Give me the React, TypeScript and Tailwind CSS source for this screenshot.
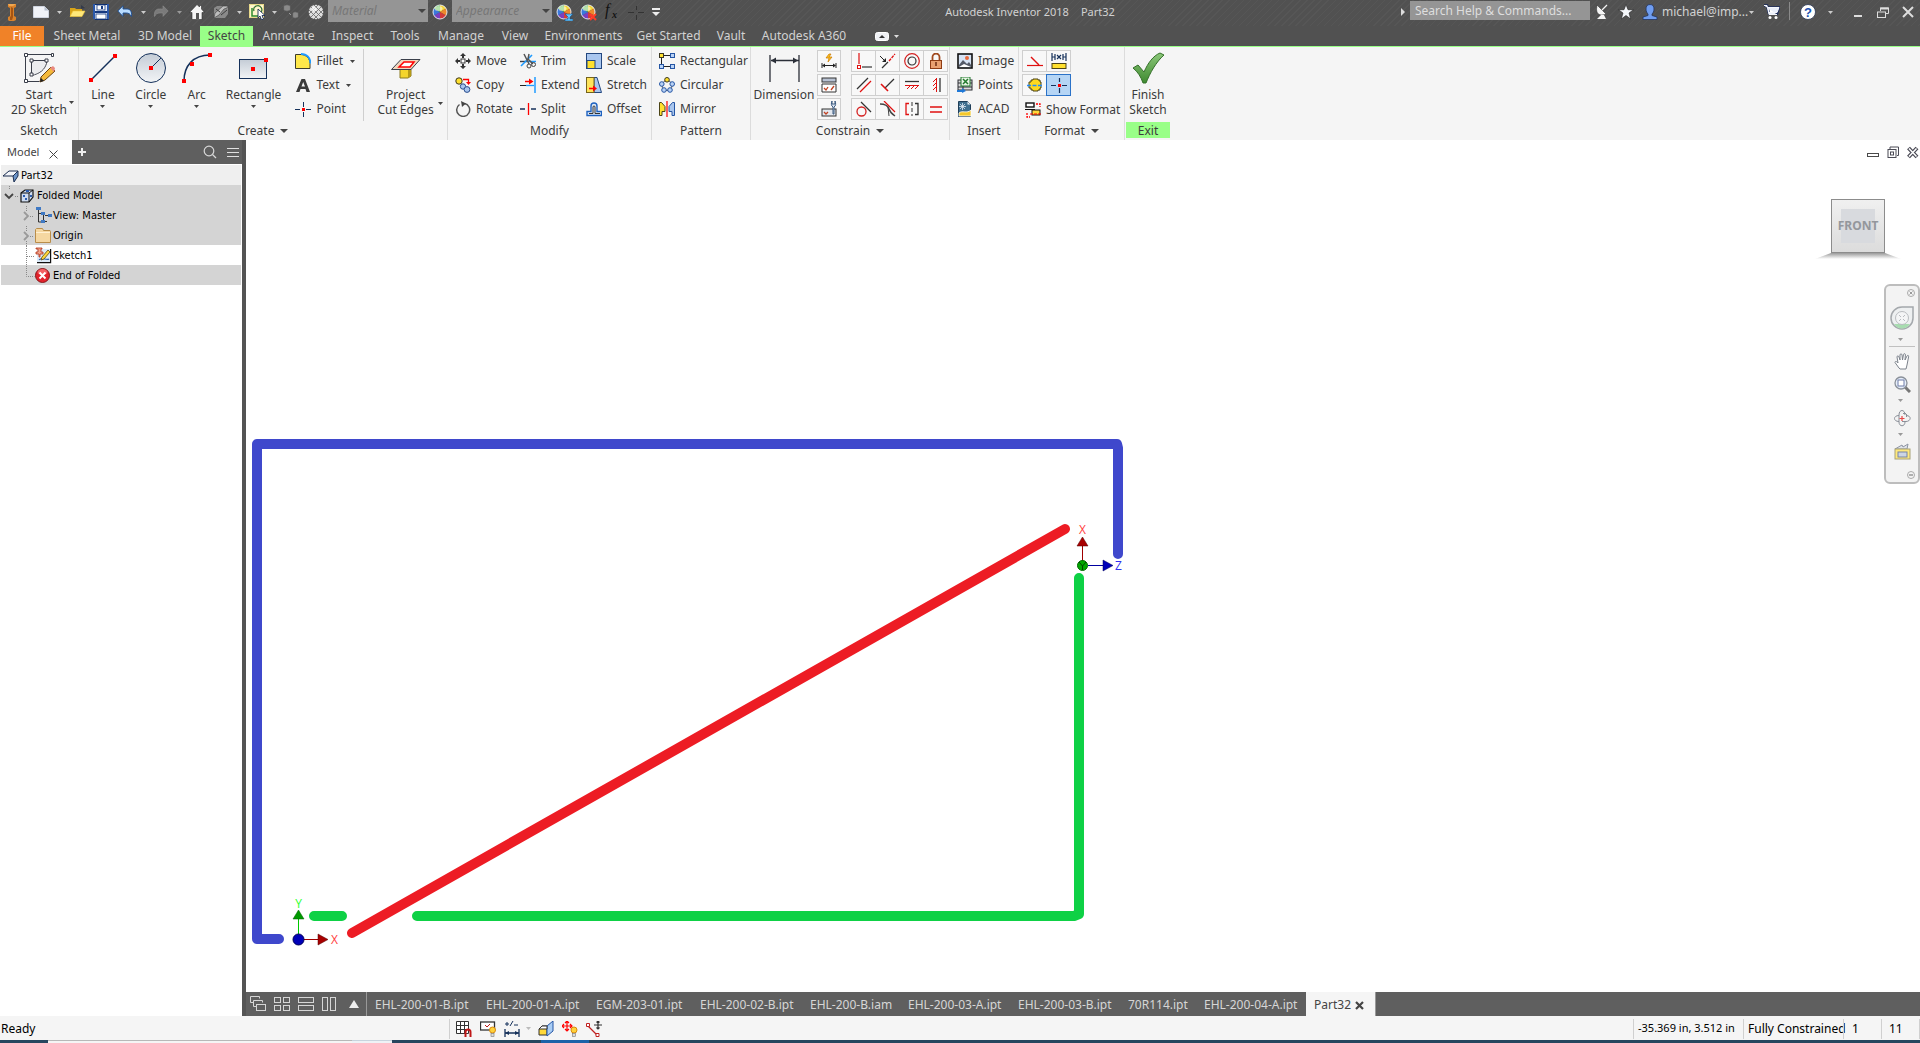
import type { ReactNode } from "react";

const RED = "#e01010";
const NAVY = "#14305a";

function Svg({ w = 16, h = 16, children }: { w?: number; h?: number; children: ReactNode }) {
  return (
    <svg width={w} height={h} viewBox={`0 0 ${w} ${h}`} fill="none" className="shrink-0" aria-hidden="true">
      {children}
    </svg>
  );
}

function Caret({ color = "#444" }: { color?: string }) {
  return (
    <Svg w={5} h={3}>
      <path d="M0 0h5L2.500 3z" fill={color} />
    </Svg>
  );
}

function BigCaret() {
  return (
    <Svg w={8} h={4}>
      <path d="M0 0h8L4 4z" fill="#444" />
    </Svg>
  );
}

function Dot({ x, y }: { x: number; y: number }) {
  return <rect x={x - 2} y={y - 2} width="4" height="4" fill="#f00" />;
}

/* ---------- Quick access icons ---------- */

const qa = {
  logo: (
    <Svg w={14} h={20}>
      <path d="M3 2h8v3l-2 1v8l2 1v3l-2 1H4l-1-1v-3l2-1V6L3 5z" fill="#d9822b" />
      <path d="M6 5l2 1v9l-1 3-2 0v-3l1-1z" fill="#a65412" />
      <path d="M3 2h8l-3 2H4z" fill="#f0a750" />
    </Svg>
  ),
  newDoc: (
    <Svg w={16} h={14}>
      <path d="M.5 1.500h11l4 4v7H.5z" fill="#f1f3f8" stroke="#cfd4df" />
      <path d="M11.500 1.500v4h4z" fill="#b8bfce" />
    </Svg>
  ),
  open: (
    <Svg w={17} h={14}>
      <path d="M1 3h5l1 1h6v3H4l-3 5z" fill="#d8a418" />
      <path d="M4 6h12l-3 5.500H1z" fill="#ffe87a" stroke="#f3c93a" strokeWidth=".6" />
      <path d="M12 0l4 3-4 1z" fill="#333a4a" />
    </Svg>
  ),
  save: (
    <Svg w={16} h={16}>
      <path d="M.5.5h15v15H2L.5 14z" fill="#e6ecf6" stroke="#0e2c66" />
      <rect x="2" y="7" width="12" height="2" fill="#173a80" />
      <rect x="4" y="1" width="8" height="5" fill="#fff" stroke="#173a80" strokeWidth=".8" />
      <rect x="3" y="10" width="10" height="5" fill="#fff" stroke="#173a80" strokeWidth=".8" />
      <rect x="8" y="2" width="2" height="3" fill="#173a80" />
      <rect x="0" y="0" width="2" height="15" fill="#2b58aa" />
      <rect x="14" y="0" width="2" height="15" fill="#2b58aa" />
    </Svg>
  ),
  undo: (
    <Svg w={16} h={14}>
      <path d="M6 .8v3.200h4c3 0 5 2 4.500 7.500C13 9 12 8 9 8H6v3.400L.8 6z" fill="#b9dcff" stroke="#1c4c92" strokeWidth=".9" />
    </Svg>
  ),
  redo: (
    <Svg w={16} h={14}>
      <path d="M10 .8v3.200H6C3 4 1 6 1.500 11.500 3 9 4 8 7 8h3v3.400L15.200 6z" fill="#7a7a7a" stroke="#8e8e8e" strokeWidth=".6" />
    </Svg>
  ),
  home: (
    <Svg w={16} h={16}>
      <path d="M8 .5L.5 8.500H3V15.500h10V8.500h2.500L12.500 5V1.500h-2V3z" fill="#f4f4f4" stroke="#2e2e2e" strokeWidth=".6" />
      <rect x="7" y="9" width="3" height="6" fill="#555" />
    </Svg>
  ),
  update: (
    <Svg w={16} h={16}>
      <path d="M1 4l3-2h11v8l-3 4H1z" fill="#8a8a8a" />
      <path d="M1 14l1-5 8-7h5l-1 2-3 1-5 6z" fill="#bdbdbd" stroke="#3c3c3c" strokeWidth=".6" />
      <path d="M8 11l6-5M3 5l4 3" stroke="#3c3c3c" />
    </Svg>
  ),
  select: (
    <Svg w={16} h={16}>
      <rect x=".5" y=".5" width="14" height="13" fill="#fff6cc" stroke="#e8d98a" />
      <path d="M3 4v8h7" stroke="#2f8a2f" strokeWidth="1.500" />
      <path d="M5 7a4 4 0 1 1 6 2" stroke="#2d6d2d" strokeWidth="1.200" />
      <path d="M9 5v9l2-2 1.500 4 2-1-1.500-3.500H16z" fill="#fff" stroke="#1b2d55" strokeWidth=".9" />
    </Svg>
  ),
  cubes: (
    <Svg w={16} h={16}>
      <path d="M1 2l3-1 3 1v4L4 7 1 6zM10 9l2-1 3 1v4l-3 1-2-1z" fill="#8a8a8a" stroke="#777" strokeWidth=".5" />
      <path d="M6 9l2 2" stroke="#999" />
    </Svg>
  ),
  sphere: (
    <Svg w={16} h={16}>
      <circle cx="8" cy="8" r="7.300" fill="#dedede" />
      <path
        d="M3 3l10 10M1 6l9 9M6 1l9 9M13 3L3 13M10 1L1 10M15 6l-9 9"
        stroke="#666"
        strokeWidth=".8"
      />
      <circle cx="6" cy="5" r="2.500" fill="#fff" opacity=".7" />
    </Svg>
  ),
  fx: (
    <svg width="16" height="18" viewBox="0 0 16 18" aria-hidden="true">
      <text x="1" y="12" fontFamily="Liberation Serif, serif" fontStyle="italic" fontSize="16" fill="#111">
        f
      </text>
      <text x="8" y="15" fontFamily="Liberation Serif, serif" fontStyle="italic" fontWeight="bold" fontSize="10" fill="#111">
        x
      </text>
    </svg>
  ),
  cross: (
    <Svg w={16} h={16}>
      <path d="M0 8.500h6M10 8.500h6M8.500 2v4M8.500 11v5" stroke="#333" />
    </Svg>
  ),
};

function Wheel({ badge }: { badge?: "plus" | "x" }) {
  return (
    <Svg w={17} h={17}>
      <path d="M8 8L8 1A7 7 0 0 1 14 4.500z" fill="#f4d435" />
      <path d="M8 8L14 4.500A7 7 0 0 1 14 11.500z" fill="#ef8a2c" />
      <path d="M8 8L14 11.500A7 7 0 0 1 8 15z" fill="#d33a3a" />
      <path d="M8 8L8 15A7 7 0 0 1 2 11.500z" fill="#7a3fc0" />
      <path d="M8 8L2 11.500A7 7 0 0 1 2 4.500z" fill="#3a78dc" />
      <path d="M8 8L2 4.500A7 7 0 0 1 8 1z" fill="#59bd4a" />
      <circle cx="8" cy="8" r="7" stroke="#eef2f8" strokeWidth=".9" />
      <ellipse cx="6.500" cy="4.500" rx="4" ry="2.500" fill="#fff" opacity=".55" />
      {badge === "plus" && <path d="M9 10h8l-3 3v2h3v2H9v-2h3v-2z" fill="#5ec6ff" stroke="#1a4a85" strokeWidth=".6" />}
      {badge === "x" && <path d="M10 10l6 6M16 10l-6 6" stroke="#ff3b26" strokeWidth="2" />}
    </Svg>
  );
}

/* ---------- Ribbon icons ---------- */

const big = {
  start: (
    <Svg w={32} h={32}>
      <path d="M2.500 2.500h27M2.500 2.500v27h14M8.500 8.500h15v3c-2 6-6 10-15 12z" stroke="#3a3f4a" />
      <path d="M9 9h14c-1 8-6 12-14 14z" fill="#e4e6ea" opacity=".6" />
      <path d="M1.500 1.500h3v3h-3zM28.500 1.500h2v3h-2zM1.500 27.500h3v3h-3zM7 7h3v3H7zM22 7h3v3h-3zM7 21h3v3H7z" fill="#fff" stroke="#3a3f4a" />
      <path d="M18 25l10-10 4 4-10 9-5 2z" fill="#f5b93a" stroke="#6b4310" />
      <path d="M27 16l3-2 2 2-1 4z" fill="#e98a80" />
      <path d="M17 30l1-4 3 3z" fill="#222" />
    </Svg>
  ),
  line: (
    <Svg w={32} h={32}>
      <path d="M4 28L28 4" stroke={NAVY} strokeWidth="1.500" />
      <Dot x={4} y={28} />
      <Dot x={28} y={4} />
    </Svg>
  ),
  circle: (
    <Svg w={32} h={32}>
      <defs>
        <linearGradient id="gc" x1="0" y1="0" x2="0" y2="1">
          <stop offset="0" stopColor="#c4ccd6" />
          <stop offset="1" stopColor="#f2f4f6" />
        </linearGradient>
      </defs>
      <circle cx="16" cy="16" r="14.500" fill="url(#gc)" stroke={NAVY} />
      <path d="M16 16L26 6" stroke={NAVY} />
      <Dot x={16} y={16} />
    </Svg>
  ),
  arc: (
    <Svg w={32} h={32}>
      <path d="M3 29C3 14 12 3 29 3" stroke={NAVY} strokeWidth="1.500" />
      <Dot x={3} y={29} />
      <Dot x={11} y={12} />
      <Dot x={29} y={3} />
    </Svg>
  ),
  rect: (
    <Svg w={32} h={32}>
      <rect x="1.500" y="7.500" width="27" height="19" fill="url(#gc)" stroke={NAVY} />
      <Dot x={15} y={17} />
      <Dot x={28} y={8} />
    </Svg>
  ),
  project: (
    <Svg w={32} h={32}>
      <path d="M10 15h11v9l-3 2h-8z" fill="#f4d52c" stroke="#8a7a22" />
      <path d="M18 17l3-2v9l-3 2z" fill="#b59a18" />
      <path d="M1.500 17.500L11 7.500h19l-9 10z" fill="#f2d6bd" stroke="#3a3f4a" />
      <path d="M9 15l5-5h10l-4 5z" fill="#fff" stroke="#f00" strokeWidth="1.500" />
    </Svg>
  ),
  dimension: (
    <Svg w={32} h={32}>
      <path d="M2 3v27M31 3v27M3 8.500h28" stroke="#2b2f38" strokeWidth="1.300" />
      <path d="M3 8.500l5-3v6zM30 8.500l-5-3v6z" fill="#2b2f38" />
    </Svg>
  ),
  finish: (
    <Svg w={32} h={32}>
      <defs>
        <linearGradient id="gf" x1="0" y1="0" x2="0" y2="1">
          <stop offset="0" stopColor="#8cc87a" />
          <stop offset="1" stopColor="#3f8a30" />
        </linearGradient>
      </defs>
      <path d="M1 16l5-3 6 7C16 11 21 4 28 1l4 2C24 10 18 21 14 31h-3C9 25 6 20 1 16z" fill="url(#gf)" stroke="#35702a" />
    </Svg>
  ),
};

const sm: Record<string, ReactNode> = {
  fillet: (
    <Svg>
      <path d="M.5 15.500V1.500H6c5 0 9 4 9 9v5z" fill="#ffe84a" stroke="#3c3c2c" />
      <path d="M6 1c6 0 9.500 4 9.500 9.500" stroke="#1f9bff" strokeWidth="1.800" />
    </Svg>
  ),
  text: (
    <Svg>
      <path d="M1 15L6.500 2h3.500l5 13h-3.500l-1-3h-5l-1 3zM6.500 9.500H10L8.200 5z" fill="#3a3a3a" fillRule="evenodd" />
    </Svg>
  ),
  point: (
    <Svg>
      <path d="M0 8.500h5M11 8.500h5M8.500 1v5M8.500 11v5" stroke={NAVY} />
      <rect x="7" y="7" width="3" height="3" fill="#f00" />
    </Svg>
  ),
  move: (
    <Svg>
      <rect x="6" y="6" width="4" height="4" fill="#fff" stroke="#333" />
      <path d="M8 0l3 3H9v2H7V3H5zM8 16l3-3H9v-2H7v2H5zM0 8l3-3v2h2v2H3v2zM16 8l-3-3v2h-2v2h2v2z" fill="#333" />
    </Svg>
  ),
  copy: (
    <Svg>
      <circle cx="4" cy="4" r="3.200" fill="#ffe02e" stroke="#3b3720" />
      <circle cx="8" cy="9.500" r="2.700" fill="#a9c6ee" stroke="#2c4f8e" />
      <circle cx="12" cy="12.500" r="2.900" fill="#a9c6ee" stroke="#2c4f8e" />
      <path d="M8 2.500h5.500v3" stroke="#f00" strokeWidth="1.300" />
      <path d="M11 5h5l-2.500 3z" fill="#f00" />
    </Svg>
  ),
  rotate: (
    <Svg>
      <path d="M9.500 2.500a6.500 6.500 0 1 1-5 1" stroke="#555" strokeWidth="1.500" />
      <path d="M6 0l5 2.500L7 6z" fill="#444" />
    </Svg>
  ),
  trim: (
    <Svg>
      <path d="M0 8.500h7" stroke="#3b3f48" strokeWidth="1.400" />
      <path d="M8 8.500h8" stroke="#1f9bff" strokeWidth="1.500" />
      <path d="M1 13L12 2" stroke="#1f9bff" strokeWidth="1.600" />
      <path d="M4 1l5 10M9 1L8 6l5 5" stroke="#555" strokeWidth="1.500" />
      <circle cx="9" cy="13" r="2" stroke="#444" />
      <circle cx="13.500" cy="11.500" r="2" stroke="#444" />
    </Svg>
  ),
  extend: (
    <Svg>
      <path d="M15 0v16" stroke="#1f9bff" strokeWidth="1.500" />
      <path d="M0 8.500h6" stroke="#222" />
      <path d="M6 8.500h8" stroke="#1f9bff" strokeWidth="1.300" />
      <path d="M5 4.500h5" stroke="#f00" strokeWidth="1.500" />
      <path d="M9 1.500l4.500 3-4.500 3z" fill="#f00" />
    </Svg>
  ),
  split: (
    <Svg>
      <path d="M0 8h5M11 8h5" stroke={NAVY} strokeWidth="1.500" />
      <path d="M8.500 2v12" stroke="#f00" strokeWidth="1.300" />
    </Svg>
  ),
  scale: (
    <Svg>
      <rect x=".5" y=".5" width="15" height="15" fill="#a9c6ee" stroke="#23477f" />
      <rect x="1" y="7.500" width="8" height="8" fill="#ffe02e" stroke="#23477f" />
    </Svg>
  ),
  stretch: (
    <Svg>
      <path d="M8 .5h3l4.500 15H8z" fill="#a9c6ee" stroke="#23477f" />
      <rect x=".5" y=".5" width="7.500" height="15" fill="#ffe35a" stroke="#75631b" />
      <path d="M3 11.500h5" stroke="#f00" strokeWidth="1.500" />
      <path d="M7 8.500l4 3-4 3z" fill="#f00" />
    </Svg>
  ),
  offset: (
    <Svg>
      <path d="M1 14.500h14.500v-4H11V5a3 3 0 0 0-6 0v5.500H1z" fill="#dfeaf7" stroke="#1e62c0" strokeWidth="1.400" />
      <path d="M3 12.500h4V6a1 1 0 0 1 2 0v6.500h5" stroke="#333" />
    </Svg>
  ),
  rectangular: (
    <Svg>
      <path d="M4 2.500h8M2.500 4v8M4 13.500h8" stroke="#222" />
      <rect x=".5" y=".5" width="4" height="4" fill="#ffe02e" stroke="#3b3720" />
      <rect x="11.500" y=".5" width="4" height="4" fill="#b9d2f5" stroke="#2455a4" />
      <rect x=".5" y="11.500" width="4" height="4" fill="#b9d2f5" stroke="#2455a4" />
      <rect x="11.500" y="11.500" width="4" height="4" fill="#b9d2f5" stroke="#2455a4" />
    </Svg>
  ),
  circular: (
    <Svg>
      <circle cx="8" cy="8.500" r="5" stroke="#555" />
      <circle cx="8" cy="2.800" r="2.300" fill="#ffe02e" stroke="#3b3720" />
      <circle cx="2.800" cy="7" r="2.300" fill="#b9d2f5" stroke="#2455a4" />
      <circle cx="13.200" cy="7" r="2.300" fill="#b9d2f5" stroke="#2455a4" />
      <circle cx="5" cy="13" r="2.300" fill="#b9d2f5" stroke="#2455a4" />
      <circle cx="11" cy="13" r="2.300" fill="#b9d2f5" stroke="#2455a4" />
    </Svg>
  ),
  mirror: (
    <Svg>
      <path d="M.5 14.500v-13h2l3.500 4v5h-3v4z" fill="#ffe02e" stroke="#4b4316" />
      <path d="M15.500 14.500v-13h-2l-3.500 4v5h3v4z" fill="#a9c6ee" stroke="#2455a4" />
      <path d="M8 0v16" stroke="#f00" strokeWidth="1.200" />
    </Svg>
  ),
  image: (
    <Svg>
      <rect x="1" y="1" width="14" height="14" fill="#d7e3f4" stroke="#111" strokeWidth="1.600" />
      <circle cx="10" cy="5" r="2" fill="#e96a3c" />
      <path d="M2 12l4-5 4 4 2-2 2 3v2H2z" fill="#555b68" />
      <path d="M2 14l5-3 7 3z" fill="#fff" />
    </Svg>
  ),
  points: (
    <Svg>
      <rect x="1" y="3" width="14" height="10" fill="#dcdcdc" stroke="#2d2f35" />
      <path d="M1 6h14M1 10h14M6 3v10" stroke="#2d2f35" />
      <rect x="4" y="0" width="9" height="9" fill="#e9f5e6" stroke="#217a2c" />
      <path d="M6 2l5 5M11 2L6 7" stroke="#217a2c" strokeWidth="1.500" />
      <path d="M0 13h5v-2l4 3-4 2v-1H0z" fill="#1f78d6" />
    </Svg>
  ),
  acad: (
    <Svg>
      <path d="M1.500.5h9l3 3v12h-12z" fill="#3f6f8e" stroke="#1f3e58" />
      <path d="M10.500.5v3h3z" fill="#e8eff5" />
      <path d="M5.500 2v7M2 5.500h7M3 3l5 5M8 3L3 8" stroke="#dfeaf2" strokeWidth=".8" />
      <path d="M2 12c3-3 8 1 12-3v6H2z" fill="#f4c82a" stroke="#fff" strokeWidth=".8" />
    </Svg>
  ),
  showFormat: (
    <Svg>
      <rect x="1" y="1" width="8" height="4" fill="#fff" stroke="#111" strokeWidth="1.400" />
      <path d="M0 7.500h10" stroke="#111" />
      <rect x="7" y="8" width="8" height="5" fill="#ffd83a" stroke="#111" />
      <path d="M5 12h11" stroke="#f00" strokeDasharray="3 1" />
      <path d="M11 2h4v3M2 11v4h3" stroke="#f00" strokeWidth="1.300" strokeDasharray="2 1" />
    </Svg>
  ),
};

const con: Record<string, ReactNode> = {
  auto: (
    <Svg>
      <path d="M1 10v5M15 10v5M2 12.500h12" stroke="#222" />
      <path d="M1 12.500l3-2v4zM15 12.500l-3-2v4z" fill="#222" />
      <path d="M8 1L5 5h3l-1 4 4-5H8l2-3z" fill="#ffc21c" stroke="#c77700" strokeWidth=".7" />
    </Svg>
  ),
  show: (
    <Svg>
      <rect x="1" y="1" width="14" height="4" fill="#b8c2d3" stroke="#333" />
      <path d="M1 7h14v8H1z" fill="#fff" stroke="#333" />
      <path d="M3 11l2 2 2-3M10 13l3-4" stroke="#c04020" strokeWidth="1.300" />
    </Svg>
  ),
  settings: (
    <Svg>
      <rect x="1" y="8" width="14" height="7" fill="#e3e8ef" stroke="#333" />
      <path d="M3 11l2 2 2-2" stroke="#c04020" strokeWidth="1.300" />
      <path d="M12 13V6c-2-1-2-4-1-6v3h3V0c1 2 1 5-1 6v7z" fill="#dfe7f2" stroke="#39597f" />
    </Svg>
  ),
  coincident: (
    <Svg>
      <path d="M3 0v11" stroke={RED} strokeWidth="1.200" />
      <rect x="1.500" y="12.500" width="3" height="3" fill="#fff" stroke={RED} />
      <path d="M6 14h10" stroke="#333" strokeWidth="1.200" />
    </Svg>
  ),
  collinear: (
    <Svg>
      <path d="M2 15l6-6" stroke="#333" strokeWidth="1.300" />
      <path d="M9 8l6-7" stroke={RED} strokeWidth="1.300" strokeDasharray="3 1" />
      <path d="M0 3l4 4" stroke="#222" />
      <path d="M6 9l-4 0 4-4z" fill="#222" />
    </Svg>
  ),
  concentric: (
    <Svg>
      <circle cx="8" cy="8" r="7.300" stroke="#d42020" strokeWidth="1.200" />
      <circle cx="8" cy="8" r="4" stroke="#333" strokeWidth="1.200" />
    </Svg>
  ),
  lock: (
    <Svg>
      <path d="M4.500 8V4a3.500 3.500 0 0 1 7 0v4" stroke="#a04a20" strokeWidth="1.800" />
      <rect x="2.500" y="7.500" width="11" height="8" fill="#e9a070" stroke="#8e3c14" />
      <path d="M8 9v4" stroke="#6e2c10" strokeWidth="1.500" />
    </Svg>
  ),
  parallel: (
    <Svg>
      <path d="M1 12L12 1" stroke="#333" strokeWidth="1.300" />
      <path d="M4 15L15 4" stroke={RED} strokeWidth="1.300" />
    </Svg>
  ),
  perpendicular: (
    <Svg>
      <path d="M5 11L14 2" stroke="#333" strokeWidth="1.300" />
      <path d="M1 7l7 7" stroke={RED} strokeWidth="1.600" />
    </Svg>
  ),
  horizontal: (
    <Svg>
      <path d="M1 4.500h14" stroke="#333" strokeWidth="1.300" />
      <path d="M1 8.500h14M3 12l3-3M7 12l3-3M11 12l3-3" stroke={RED} />
    </Svg>
  ),
  vertical: (
    <Svg>
      <path d="M12 1v14" stroke="#333" strokeWidth="1.300" />
      <path d="M8.500 1v14M5 5l3-3M5 9l3-3M5 13l3-3" stroke={RED} />
    </Svg>
  ),
  tangent: (
    <Svg>
      <circle cx="5.500" cy="10.500" r="4.500" stroke="#d42020" strokeWidth="1.300" />
      <path d="M5 1l10 10" stroke="#333" strokeWidth="1.300" />
    </Svg>
  ),
  smooth: (
    <Svg>
      <path d="M0 3c5 0 8 2 9 5s3 5 6 7" stroke="#444" strokeWidth="1.500" />
      <path d="M4 0l11 11" stroke={RED} strokeWidth="1.200" />
      <path d="M8 6l1 9" stroke="#444" />
    </Svg>
  ),
  symmetric: (
    <Svg>
      <path d="M5 2.500H2v11h3" stroke={RED} strokeWidth="1.300" />
      <path d="M11 2.500h3v11h-3" stroke="#333" strokeWidth="1.300" />
      <path d="M8 1v14" stroke="#333" strokeDasharray="4 2" />
    </Svg>
  ),
  equal: (
    <Svg>
      <path d="M2 6h12M2 11h12" stroke={RED} strokeWidth="1.300" />
    </Svg>
  ),
  construction: (
    <Svg>
      <path d="M0 12.500h16" stroke={RED} strokeWidth="1.200" />
      <path d="M4 4l8 8" stroke={RED} strokeWidth="1.400" />
    </Svg>
  ),
  driven: (
    <Svg>
      <path d="M1 0v8M1 4h3M4 1v6M15 0v8M12 4h3M12 1v6" stroke={NAVY} strokeWidth="1.200" />
      <path d="M6 2l4 4M10 2L6 6" stroke={NAVY} strokeWidth="1.200" />
      <rect x="1" y="10.500" width="14" height="5" fill="#ffe02e" stroke="#4b4316" />
    </Svg>
  ),
  centerline: (
    <Svg>
      <path d="M4 3h2V2h5v1h2v2h1v6h-1v2h-2v1H6v-1H4v-2H2V5h2z" fill="#ffd91e" stroke="#4b4316" />
      <path d="M0 8.500h16" stroke="#1f8bff" strokeWidth="1.500" strokeDasharray="4 1.500" />
    </Svg>
  ),
  center: (
    <Svg>
      <path d="M0 8.500h5M11 8.500h5M8.500 1v4M8.500 11v5" stroke={NAVY} strokeWidth="1.200" />
      <rect x="7" y="7" width="3" height="3" fill="#f00" />
    </Svg>
  ),
};

/* ---------- Ribbon building blocks ---------- */

function Panel({ title, width, caret, green, last, children }: {
  title: string;
  width: string;
  caret?: boolean;
  green?: boolean;
  last?: boolean;
  children: ReactNode;
}) {
  return (
    <section className={`${width} flex shrink-0 flex-col ${last ? "" : "border-r border-[#dcdcdc]"}`}>
      <div className="flex h-[74px] pt-0.5">{children}</div>
      <h2
        className={`flex items-center justify-center gap-1.5 pt-px ${
          green ? "mx-px my-0.5 h-4 bg-[#99ff88]" : "h-5"
        }`}
      >
        {title}
        {caret && <BigCaret />}
      </h2>
    </section>
  );
}

function BigButton({ icon, lines, width, caret, side }: {
  icon: ReactNode;
  lines: string[];
  width: string;
  caret?: boolean;
  side?: boolean;
}) {
  return (
    <button type="button" className={`${width} relative flex flex-col items-center pt-[3px] leading-[15px]`}>
      {icon}
      <span className="mt-[3px] flex flex-col items-center">
        {lines.map((l) => (
          <span key={l}>{l}</span>
        ))}
      </span>
      {caret && (
        <span className={side ? "absolute right-1 bottom-4" : "mt-[3px]"}>
          <Caret />
        </span>
      )}
    </button>
  );
}

function SmallButton({ icon, label, caret }: { icon: string; label: string; caret?: boolean }) {
  return (
    <button type="button" className="flex h-6 items-center gap-[5px] whitespace-nowrap">
      {sm[icon]}
      {label}
      {caret && (
        <span className="ml-0.5">
          <Caret />
        </span>
      )}
    </button>
  );
}

function Column({ width, items }: { width: string; items: [string, string, boolean?][] }) {
  return (
    <div className={`${width} flex flex-col items-start pl-[7px]`}>
      {items.map(([icon, label, caret]) => (
        <SmallButton key={icon} icon={icon} label={label} caret={caret} />
      ))}
    </div>
  );
}

function Tool({ icon, active, joined }: { icon: string; active?: boolean; joined?: boolean }) {
  return (
    <button
      type="button"
      aria-label={icon}
      className={`flex h-[22px] items-center justify-center border ${joined ? "-ml-px w-[25px]" : "w-6"} ${
        active ? "relative border-[#2a72c8] bg-[#b5d5f5]" : "border-[#cfcfcf] bg-[#f8f8f8]"
      }`}
    >
      {con[icon]}
    </button>
  );
}

/* ---------- Page sections ---------- */

function QaButton({ label, children, width = "w-6" }: { label: string; children: ReactNode; width?: string }) {
  return (
    <button type="button" aria-label={label} className={`${width} flex h-6 shrink-0 items-center justify-center`}>
      {children}
    </button>
  );
}

function QaSelect({ label }: { label: string }) {
  return (
    <div className="relative shrink-0">
      <select
        aria-label={label}
        className="block h-[22px] w-[100px] appearance-none bg-[#959595] px-1 text-xs leading-[22px] text-[#777] italic"
      >
        <option>{label}</option>
      </select>
      <span className="pointer-events-none absolute top-[9px] right-0.5">
        <BigCaret />
      </span>
    </div>
  );
}

function TitleBar() {
  return (
    <header className="flex h-[26px] items-start justify-between bg-[#515151] bg-[repeating-linear-gradient(135deg,#515151_0px,#515151_4px,#565656_4px,#565656_5px)] text-[#d2d2d2]">
      <div className="flex items-start">
        <QaButton label="Inventor">{qa.logo}</QaButton>
        <span className="w-[5px]" />
        <QaButton label="New">{qa.newDoc}</QaButton>
        <QaButton label="New options" width="w-3"><Caret color="#ccc" /></QaButton>
        <QaButton label="Open">{qa.open}</QaButton>
        <QaButton label="Save">{qa.save}</QaButton>
        <QaButton label="Undo">{qa.undo}</QaButton>
        <QaButton label="Undo list" width="w-3"><Caret color="#ccc" /></QaButton>
        <QaButton label="Redo">{qa.redo}</QaButton>
        <QaButton label="Redo list" width="w-3"><Caret color="#999" /></QaButton>
        <QaButton label="Home">{qa.home}</QaButton>
        <QaButton label="Update">{qa.update}</QaButton>
        <QaButton label="Update options" width="w-3"><Caret color="#ccc" /></QaButton>
        <QaButton label="Select">{qa.select}</QaButton>
        <QaButton label="Select options" width="w-2.5"><Caret color="#ccc" /></QaButton>
        <QaButton label="Return">{qa.cubes}</QaButton>
        <QaButton label="Material browser" width="w-[25px]">{qa.sphere}</QaButton>
        <QaSelect label="Material" />
        <QaButton label="Appearance browser"><Wheel /></QaButton>
        <QaSelect label="Appearance" />
        <QaButton label="Adjust appearance"><Wheel badge="plus" /></QaButton>
        <QaButton label="Clear appearance"><Wheel badge="x" /></QaButton>
        <QaButton label="Parameters">{qa.fx}</QaButton>
        <QaButton label="Work point">{qa.cross}</QaButton>
        <QaButton label="Customize" width="w-4">
          <Svg w={8} h={8}>
            <path d="M0 1h8" stroke="#eee" strokeWidth="2" />
            <path d="M0 4h8L4 8z" fill="#eee" />
          </Svg>
        </QaButton>
      </div>
      <h1 className="flex gap-3 pt-1 text-[11px] leading-4">
        <span>Autodesk Inventor 2018</span>
        <span>Part32</span>
      </h1>
      <div className="flex items-start">
        <QaButton label="Expand search" width="w-3.5">
          <Svg w={4} h={8}>
            <path d="M0 0v8l4-4z" fill="#ddd" />
          </Svg>
        </QaButton>
        <input
          aria-label="Search Help and Commands"
          placeholder="Search Help & Commands..."
          className="mt-px h-[19px] w-[180px] bg-[#959595] px-[5px] text-xs placeholder:text-[#dedede]"
        />
        <QaButton label="Communication center">
          <Svg w={14}>
            <path d="M2 1l9 9c-4 2-8 1-9-2s0-5 0-7z" fill="#f4f4f4" stroke="#222" strokeWidth=".5" />
            <path d="M7 6l5-5" stroke="#f4f4f4" strokeWidth="1.300" />
            <path d="M6 11h3l2 4H2z" fill="#f4f4f4" />
          </Svg>
        </QaButton>
        <QaButton label="Favorites">
          <Svg>
            <path d="M8 .5l2 5.200h5.500L11 9l1.700 6L8 11.500 3.300 15 5 9 .5 5.700H6z" fill="#f4f6fa" stroke="#222" strokeWidth=".6" />
          </Svg>
        </QaButton>
        <QaButton label="User">
          <Svg>
            <path d="M8 .5c3 0 4 2 4 4.500S11 9 10 10v1.500l5 1.500v2.500H1V13l5-1.500V10C5 9 4 7.500 4 5S5 .5 8 .5z" fill="#6f9df0" stroke="#22345e" strokeWidth=".8" />
          </Svg>
        </QaButton>
        <button type="button" className="flex h-6 w-[95px] items-center justify-between pr-[3px]">
          michael@imp...
          <Caret color="#ccc" />
        </button>
        <QaButton label="Store" width="w-[30px]">
          <Svg>
            <path d="M0 1.500h3l2 8h8l2-6H4" fill="#fff" stroke="#1c2c5c" strokeWidth="2.500" />
            <path d="M0 1.500h3l2 9h8M4 3.500h11l-2 5H5z" fill="#e9eefa" stroke="#f4f6fc" />
            <circle cx="6" cy="13.500" r="1.500" fill="#fff" />
            <circle cx="12" cy="13.500" r="1.500" fill="#fff" />
          </Svg>
        </QaButton>
        <span className="mx-0.5 mt-0.5 h-[18px] w-px bg-[#8a8a8a]" />
        <QaButton label="Help" width="w-8">
          <svg width="16" height="16" viewBox="0 0 16 16" aria-hidden="true">
            <circle cx="8" cy="8" r="7.500" fill="#fff" stroke="#2a3550" strokeWidth=".8" />
            <text x="8" y="12.500" textAnchor="middle" fontFamily="Liberation Sans, sans-serif" fontWeight="bold" fontSize="13" fill="#2050b0">
              ?
            </text>
          </svg>
        </QaButton>
        <QaButton label="Help options" width="w-3"><Caret color="#ccc" /></QaButton>
        <span className="w-2.5" />
        <QaButton label="Minimize">
          <Svg w={8} h={10}><path d="M0 9h8" stroke="#ddd" strokeWidth="2" /></Svg>
        </QaButton>
        <QaButton label="Restore" width="w-[26px]">
          <Svg w={12} h={11}>
            <path d="M3.500 4V1h8v5.500h-3" stroke="#ddd" />
            <path d="M3 1.500h9" stroke="#ddd" strokeWidth="2" />
            <rect x=".5" y="5" width="8" height="5.500" stroke="#ddd" />
          </Svg>
        </QaButton>
        <QaButton label="Close">
          <Svg w={12} h={12}><path d="M1 1l10 10M11 1L1 11" stroke="#ddd" strokeWidth="2" /></Svg>
        </QaButton>
      </div>
    </header>
  );
}

const ribbonTabs: [string, string][] = [
  ["Sheet Metal", "w-[86px]"],
  ["3D Model", "w-[70px]"],
  ["Sketch", "w-[53px]"],
  ["Annotate", "w-[71px]"],
  ["Inspect", "w-[57px]"],
  ["Tools", "w-[48px]"],
  ["Manage", "w-[64px]"],
  ["View", "w-[44px]"],
  ["Environments", "w-[93px]"],
  ["Get Started", "w-[77px]"],
  ["Vault", "w-[48px]"],
  ["Autodesk A360", "w-[98px]"],
];

function RibbonTabs() {
  return (
    <nav className="flex h-[21px] border-b border-[#99ff88] bg-[#515151] text-[#d2d2d2]">
      <button type="button" className="w-11 bg-[#f08228] text-white">File</button>
      {ribbonTabs.map(([label, width]) => (
        <button
          key={label}
          type="button"
          className={`${width} shrink-0 whitespace-nowrap ${label === "Sketch" ? "bg-[#99ff88] text-[#444]" : ""}`}
        >
          {label}
        </button>
      ))}
      <button type="button" aria-label="Ribbon display" className="ml-[22px] flex items-center gap-[5px]">
        <Svg w={14} h={9}>
          <rect x=".5" y=".5" width="13" height="8" rx="2" fill="#eef0f4" stroke="#fff" />
          <path d="M4 6h6L7 3z" fill="#333" />
        </Svg>
        <Caret color="#ddd" />
      </button>
    </nav>
  );
}

const constraintRows = [
  ["coincident", "collinear", "concentric", "lock"],
  ["parallel", "perpendicular", "horizontal", "vertical"],
  ["tangent", "smooth", "symmetric", "equal"],
];

function Ribbon() {
  return (
    <div className="flex h-[93px] bg-[#f5f5f5] text-[#3b3b3b]">
      <Panel title="Sketch" width="w-[79px]">
        <BigButton icon={big.start} lines={["Start", "2D Sketch"]} width="w-full" caret side />
      </Panel>
      <Panel title="Create" width="w-[369px]" caret>
        <BigButton icon={big.line} lines={["Line"]} width="w-12" caret />
        <BigButton icon={big.circle} lines={["Circle"]} width="w-12" caret />
        <BigButton icon={big.arc} lines={["Arc"]} width="w-11" caret />
        <BigButton icon={big.rect} lines={["Rectangle"]} width="w-[70px]" caret />
        <Column width="w-[75px]" items={[["fillet", "Fillet", true], ["text", "Text", true], ["point", "Point"]]} />
        <span className="w-px bg-[#cfcfcf]" />
        <BigButton icon={big.project} lines={["Project", "Cut Edges"]} width="w-[83px]" caret side />
      </Panel>
      <Panel title="Modify" width="w-[204px]">
        <Column width="w-[65px]" items={[["move", "Move"], ["copy", "Copy"], ["rotate", "Rotate"]]} />
        <Column width="w-[66px]" items={[["trim", "Trim"], ["extend", "Extend"], ["split", "Split"]]} />
        <Column width="w-[72px]" items={[["scale", "Scale"], ["stretch", "Stretch"], ["offset", "Offset"]]} />
      </Panel>
      <Panel title="Pattern" width="w-[99px]">
        <Column
          width="w-full"
          items={[["rectangular", "Rectangular"], ["circular", "Circular"], ["mirror", "Mirror"]]}
        />
      </Panel>
      <Panel title="Constrain" width="w-[199px]" caret>
        <BigButton icon={big.dimension} lines={["Dimension"]} width="w-[66px]" />
        <div className="flex flex-col gap-0.5 pt-px">
          <Tool icon="auto" />
          <Tool icon="show" />
          <Tool icon="settings" />
        </div>
        <div className="ml-[11px] flex flex-col gap-0.5 pt-px">
          {constraintRows.map((row) => (
            <div key={row[0]} className="flex">
              {row.map((icon) => (
                <Tool key={icon} icon={icon} joined />
              ))}
            </div>
          ))}
        </div>
      </Panel>
      <Panel title="Insert" width="w-[69px]">
        <Column width="w-full" items={[["image", "Image"], ["points", "Points"], ["acad", "ACAD"]]} />
      </Panel>
      <Panel title="Format" width="w-[106px]" caret>
        <div className="flex flex-col gap-0.5 pt-px pl-1">
          <div className="flex">
            <Tool icon="construction" joined />
            <Tool icon="driven" joined />
          </div>
          <div className="flex">
            <Tool icon="centerline" joined />
            <Tool icon="center" joined active />
          </div>
          <div className="pl-0.5">
            <SmallButton icon="showFormat" label="Show Format" />
          </div>
        </div>
      </Panel>
      <Panel title="Exit" width="w-[46px]" green last>
        <BigButton icon={big.finish} lines={["Finish", "Sketch"]} width="w-full" />
      </Panel>
    </div>
  );
}

/* ---------- Model browser ---------- */

const chevronRight = <path d="M23 6l4 4-4 4" stroke="#999" strokeWidth="1.800" />;
const dotted = { stroke: "#888", strokeDasharray: "1 1" };

const tree: { label: string; bg: string; w: number; art: ReactNode }[] = [
  {
    label: "Part32",
    bg: "bg-[#efefef]",
    w: 19,
    art: (
      <>
        <path d="M2 10l6-5h9l-5 5z" fill="#f4f6fa" stroke="#1a2d50" />
        <path d="M12 10l5-5v5l-4 6z" fill="#6b93c8" stroke="#1a2d50" />
      </>
    ),
  },
  {
    label: "Folded Model",
    bg: "bg-[#d4d4d4]",
    w: 35,
    art: (
      <>
        <path d="M8.500 0v4M14 10.500h4" {...dotted} />
        <path d="M4 8l4 4 4-4" stroke="#444" strokeWidth="1.800" />
        <path d="M20 7l4-3h8v7l-4 5h-8z" fill="#cfdcf0" stroke="#111" strokeWidth="1.200" />
        <path d="M20 7h8v9M28 7l4-3" stroke="#111" />
        <path d="M22 9h2v2h-2zM24 12h2v2h-2zM25 4h3v2h-3zM29 9h2v2h-2z" fill="#2c5cae" />
      </>
    ),
  },
  {
    label: "View: Master",
    bg: "bg-[#d4d4d4]",
    w: 51,
    art: (
      <>
        <path d="M25.500 0v5M29 10.500h4" {...dotted} />
        {chevronRight}
        <path d="M37.500 4v12h3M37.500 7.500h3M42.500 9v6M44 9.500h6M44 15.500h2" stroke="#333" />
        <path d="M35 1h5v3h-5zM40 6h4v3h-4zM40 14h4v3h-4zM47 8h4v3h-4z" fill="#3f79c4" />
      </>
    ),
  },
  {
    label: "Origin",
    bg: "bg-[#d4d4d4]",
    w: 51,
    art: (
      <>
        <path d="M25.500 0v5M25.500 15v5M29 10.500h4" {...dotted} />
        {chevronRight}
        <path d="M34.500 16.500v-13l1-1h6l1 2h6.500l.5 1v11z" fill="#f5d7a1" stroke="#b98d4a" />
        <path d="M35 6.500h14" stroke="#fff0d2" />
      </>
    ),
  },
  {
    label: "Sketch1",
    bg: "bg-white",
    w: 51,
    art: (
      <>
        <path d="M25.500 0v20M26 10.500h8" {...dotted} />
        <path d="M36 16.500h13.500V3" stroke="#111" strokeWidth="1.400" />
        <rect x="36" y="3" width="13" height="13" fill="#dceaf8" />
        <path d="M38 14c3-4 7 1 10-1" stroke="#2b62b0" strokeWidth="1.200" />
        <path d="M41 11l6-7 2 2-6 7-3 1z" fill="#ffd63a" stroke="#5e4a10" strokeWidth=".8" />
        <path d="M35 2h6v1h-1v3h2v2h-3v3h-1V8h-3V6h2V3h-2z" fill="#f3a58c" stroke="#b23418" strokeWidth=".8" />
      </>
    ),
  },
  {
    label: "End of Folded",
    bg: "bg-[#d4d4d4]",
    w: 51,
    art: (
      <>
        <path d="M25.500 0v10.500h8" {...dotted} />
        <circle cx="41.500" cy="9.500" r="7" fill="#e2232c" stroke="#7d0d12" strokeWidth=".9" />
        <ellipse cx="41.500" cy="6" rx="5" ry="3" fill="#ff8a8a" opacity=".6" />
        <path d="M38.500 6.500l6 6M44.500 6.500l-6 6" stroke="#fff" strokeWidth="2" />
      </>
    ),
  },
];

function ModelBrowser() {
  return (
    <aside className="flex w-[242px] shrink-0 flex-col bg-white">
      <div className="flex h-6 bg-[#5f5f5f]">
        <div className="flex w-[72px] items-center bg-white pl-[7px] text-[11px] text-[#444]">
          Model
          <button type="button" aria-label="Close panel" className="mt-1 ml-auto pr-3.5">
            <Svg w={9} h={9}><path d="M.5.5l8 8M8.500.5l-8 8" stroke="#444" /></Svg>
          </button>
        </div>
        <button type="button" aria-label="Add panel" className="ml-1.5">
          <Svg w={8} h={8}><path d="M4 0v8M0 4h8" stroke="#eee" strokeWidth="2" /></Svg>
        </button>
        <button type="button" aria-label="Search" className="ml-auto">
          <Svg w={14} h={14}>
            <circle cx="6" cy="6" r="4.800" stroke="#d8d8d8" strokeWidth="1.200" />
            <path d="M9.500 9.500l3.500 3.500" stroke="#d8d8d8" strokeWidth="1.200" />
          </Svg>
        </button>
        <button type="button" aria-label="Menu" className="mr-[3px] ml-2.5">
          <Svg w={12} h={11}><path d="M0 1.500h12M0 5.500h12M0 9.500h12" stroke="#e0e0e0" /></Svg>
        </button>
      </div>
      <ul className="mt-px mr-px ml-px font-['DejaVu_Sans_Condensed','DejaVu_Sans',sans-serif] text-[11px] text-black">
        {tree.map((row) => (
          <li key={row.label} className={`flex h-5 items-center gap-px pt-0.5 ${row.bg}`}>
            <Svg w={row.w} h={20}>{row.art}</Svg>
            {row.label}
          </li>
        ))}
      </ul>
    </aside>
  );
}

/* ---------- Graphics window ---------- */

function Sketch() {
  return (
    <svg width="1674" height="852" viewBox="246 140 1674 852" fill="none" className="absolute top-0 left-0">
      <g strokeWidth="10" strokeLinecap="round" strokeLinejoin="round">
        <path d="M279 939H257V444H1117L1118 448V554" stroke="#3f48cc" />
        <path d="M314 916H342M417 916H1074L1079 914V578" stroke="#0ed145" />
        <path d="M352 933L1065 529" stroke="#ed1c24" />
      </g>
      <g fontFamily="Open Sans, sans-serif" fontSize="12" textAnchor="middle">
        <path d="M298.500 934V918" stroke="#00c800" />
        <path d="M293 919h11l-5.500-9z" fill="#009a00" stroke="#006000" strokeWidth=".5" />
        <path d="M304 939.500h15" stroke="#a00000" />
        <path d="M318 934v11l10-5.500z" fill="#a80000" stroke="#500" strokeWidth=".5" />
        <circle cx="298.500" cy="939.500" r="5.500" fill="#0000b8" stroke="#000058" />
        <text x="298.500" y="908" fill="#30ff30">Y</text>
        <text x="334.500" y="944" fill="#ff4040">X</text>
        <path d="M1082.500 561V546" stroke="#a00000" />
        <path d="M1077 546h11l-5.500-9z" fill="#a80000" stroke="#500" strokeWidth=".5" />
        <path d="M1088 565.500h15" stroke="#0000a0" />
        <path d="M1103 560v11l10-5.500z" fill="#0000b8" stroke="#000058" strokeWidth=".5" />
        <circle cx="1082.500" cy="565.500" r="5" fill="#00a800" stroke="#006a00" />
        <path d="M1079 562l3.500 4 3.500-4M1082.500 566v4" stroke="#004400" />
        <text x="1082.500" y="534" fill="#ff4040">X</text>
        <text x="1118.500" y="570" fill="#3030f0">Z</text>
      </g>
    </svg>
  );
}

function ViewCube() {
  return (
    <div className="absolute top-[59px] right-[19px] flex flex-col items-center">
      <button
        type="button"
        className="flex h-[54px] w-[54px] items-center justify-center border border-[#8c8c8c] bg-linear-to-b from-[#f0f0f0] to-[#dcdcdc]"
      >
        <span className="flex h-[34px] w-[34px] items-center justify-center bg-[#d8dade] text-xs font-bold text-[#94979c]">
          FRONT
        </span>
      </button>
      <Svg w={86} h={6}>
        <defs>
          <linearGradient id="sh" x1="0" y1="0" x2="0" y2="1">
            <stop offset="0" stopColor="#999" />
            <stop offset="1" stopColor="#999" stopOpacity="0" />
          </linearGradient>
        </defs>
        <path d="M16 0h54l16 6H0z" fill="url(#sh)" />
      </Svg>
    </div>
  );
}

function NavBar() {
  return (
    <div className="absolute top-[144px] right-0 flex h-[200px] w-9 flex-col items-center rounded-md border-2 border-[#bdbdbd] bg-[#f3f3f3] pt-[3px]">
      <button type="button" aria-label="Close navigation bar" className="mr-[3px] self-end">
        <Svg w={8} h={8}>
          <circle cx="4" cy="4" r="3.500" stroke="#aaa" />
          <path d="M2.500 2.500l3 3M5.500 2.500l-3 3" stroke="#999" />
        </Svg>
      </button>
      <button type="button" aria-label="Steering wheel" className="mt-[9px]">
        <Svg w={24} h={24}>
          <path d="M12 1h11v11a11 11 0 1 1-11-11z" fill="#eef0f1" stroke="#a4a8ac" strokeWidth="1.500" />
          <path d="M4 18h16c-4 6-12 6-16 0z" fill="#a8dcb0" />
          <circle cx="12" cy="12" r="6.500" fill="#f4f5f6" stroke="#b9bcc0" />
          <path d="M9 9l2 2M15 9l-2 2M9 15l2-2M15 15l-2-2" stroke="#b9bcc0" />
        </Svg>
      </button>
      <span className="mt-2 mr-1"><Caret color="#999" /></span>
      <span className="mt-[5px] mb-1.5 h-px w-[26px] bg-[#c0c0c0]" />
      <button type="button" aria-label="Pan">
        <Svg w={17} h={17}>
          <path d="M5 15L1 9.500c0-1.500 1.500-1.500 3 .5L3 4c0-1.500 1.500-1.500 2 0l1 3V2c0-1.500 2-1.500 2 0l.5 5L9.500 1.500c.3-1.300 2-1 1.900.4L11 7l2-4c.7-1.200 2-.6 1.600.8L13 12l-1 4H6z" fill="#fff" stroke="#7d838c" />
        </Svg>
      </button>
      <button type="button" aria-label="Zoom" className="mt-1.5">
        <Svg w={17} h={17}>
          <path d="M11 11l5 5" stroke="#777" strokeWidth="3" />
          <circle cx="7" cy="7" r="6" fill="#e6eefa" stroke="#8a9099" strokeWidth="1.300" />
          <rect x="4" y="4" width="6" height="6" fill="#fff" stroke="#6f7da8" />
        </Svg>
      </button>
      <span className="mt-1.5 mr-1"><Caret color="#999" /></span>
      <button type="button" aria-label="Orbit" className="mt-2">
        <Svg w={17} h={17}>
          <path d="M11 5c0-6-6-6-6 0v7c0 5 6 5 6 0M5 5.500c-6 0-6 6 0 6M12 5.500c6 0 5 6 0 6H8" stroke="#8a8f98" />
          <path d="M8 6v5M5.500 8.500h5" stroke="#e84848" strokeWidth="1.200" />
          <path d="M9 3.500h3M12.500 7V4" stroke="#8a8f98" />
        </Svg>
      </button>
      <span className="mt-1.5 mr-1"><Caret color="#999" /></span>
      <button type="button" aria-label="Look at" className="mt-[7px]">
        <Svg w={17} h={17}>
          <path d="M1 6l7-4 1 2 5-3-1 5z" fill="#dfe3ea" stroke="#8e95a3" />
          <rect x="1" y="6" width="15" height="10" fill="#ffe97c" stroke="#a8a178" />
          <rect x="4" y="9" width="9" height="5" fill="#ccd5e4" stroke="#7684a4" />
        </Svg>
      </button>
      <button type="button" aria-label="Customize navigation bar" className="mt-auto mr-[3px] mb-[3px] self-end">
        <Svg w={8} h={8}>
          <circle cx="4" cy="4" r="3.500" stroke="#aaa" />
          <path d="M2 4h4" stroke="#999" strokeWidth="1.500" />
        </Svg>
      </button>
    </div>
  );
}

function Viewport() {
  return (
    <main className="relative min-h-0 flex-1 overflow-hidden bg-white">
      <Sketch />
      <div className="absolute top-[5px] right-px flex items-center gap-2">
        <button type="button" aria-label="Minimize document">
          <Svg w={12} h={14}><rect x=".5" y="8.500" width="11" height="3" fill="#fff" stroke="#4a4a4a" /></Svg>
        </button>
        <button type="button" aria-label="Restore document">
          <Svg w={12} h={13}>
            <path d="M3 3V1h8.500v8.500H10" stroke="#4a4a55" />
            <rect x="1" y="3.500" width="8" height="8" fill="#fff" stroke="#4a4a55" />
            <rect x="3.500" y="6" width="3" height="3" stroke="#4a4a55" />
          </Svg>
        </button>
        <button type="button" aria-label="Close document">
          <Svg w={12} h={13}>
            <path d="M1.500 2l8.500 9M10 2l-8.500 9" stroke="#4a4a55" strokeWidth="4" />
            <path d="M2 2.500l7.500 8M9.500 2.500l-7.500 8" stroke="#fff" strokeWidth="1.500" />
          </Svg>
        </button>
      </div>
      <ViewCube />
      <NavBar />
    </main>
  );
}

/* ---------- Document tabs and status bar ---------- */

const documents: [string, string][] = [
  ["EHL-200-01-B.ipt", "w-[111px]"],
  ["EHL-200-01-A.ipt", "w-[110px]"],
  ["EGM-203-01.ipt", "w-[104px]"],
  ["EHL-200-02-B.ipt", "w-[110px]"],
  ["EHL-200-B.iam", "w-[98px]"],
  ["EHL-200-03-A.ipt", "w-[110px]"],
  ["EHL-200-03-B.ipt", "w-[110px]"],
  ["70R114.ipt", "w-[76px]"],
  ["EHL-200-04-A.ipt", "w-[110px]"],
];

function DocumentTabs() {
  const line = { stroke: "#d6d6d6", strokeWidth: 1 };
  return (
    <div className="flex h-6 shrink-0 items-center bg-[#5f5f5f] text-[#d6d6d6]">
      <div className="flex h-full w-[121px] items-center gap-2 border-r border-[#999] pl-1">
        <button type="button" aria-label="Cascade">
          <Svg>
            <path d="M3 6.500H.5v-6h9v2M6 10.500H3.500v-6h9v2" {...line} />
            <rect x="6.500" y="8.500" width="9" height="6" {...line} />
          </Svg>
        </button>
        <button type="button" aria-label="Arrange">
          <Svg>
            <rect x=".5" y="1.500" width="6" height="5" {...line} />
            <rect x="9.500" y="1.500" width="6" height="5" {...line} />
            <rect x=".5" y="9.500" width="6" height="5" {...line} />
            <rect x="9.500" y="9.500" width="6" height="5" {...line} />
          </Svg>
        </button>
        <button type="button" aria-label="Tile horizontally">
          <Svg>
            <rect x=".5" y="1.500" width="15" height="5" {...line} />
            <rect x=".5" y="9.500" width="15" height="5" {...line} />
          </Svg>
        </button>
        <button type="button" aria-label="Tile vertically">
          <Svg>
            <rect x=".5" y="1.500" width="5" height="13" {...line} />
            <rect x="8.500" y="1.500" width="5" height="13" {...line} />
          </Svg>
        </button>
        <button type="button" aria-label="Document list" className="ml-[3px]">
          <Svg w={10} h={8}><path d="M5 0l5 8H0z" fill="#eee" /></Svg>
        </button>
      </div>
      {documents.map(([name, width]) => (
        <button key={name} type="button" className={`${width} shrink-0 pt-0.5 pl-2 text-left whitespace-nowrap`}>
          {name}
        </button>
      ))}
      <div className="flex h-full w-[70px] items-center justify-between border-r border-[#999] bg-[#f5f5f5] pt-0.5 pr-[11px] pl-2 text-[#444]">
        Part32
        <button type="button" aria-label="Close Part32">
          <Svg w={9} h={9}><path d="M1 1l7 7M8 1L1 8" stroke="#444" strokeWidth="2.200" /></Svg>
        </button>
      </div>
    </div>
  );
}

function StatusBar() {
  return (
    <footer className="flex h-6 shrink-0 items-center bg-[#f5f5f5] pt-px text-black">
      <span className="w-[449px] pl-px">Ready</span>
      <span className="h-5 w-px bg-[#d0d0d0]" />
      <div className="ml-1.5 flex gap-2">
        <button type="button" aria-label="Snap to grid">
          <Svg>
            <path d="M.5.5h12v12H.5zM4.500.5v12M8.500.5v12M.5 4.500h12M.5 8.500h12" fill="#fff" stroke="#333" />
            <path d="M9.500 16v-5a2.500 2.500 0 0 1 5 0v5" stroke="#c01818" strokeWidth="2" />
          </Svg>
        </button>
        <button type="button" aria-label="Show constraints">
          <Svg>
            <rect x=".5" y="1" width="14" height="8" fill="#fff" stroke="#333" strokeWidth="1.300" />
            <path d="M5 4l2 2 3-3" stroke="#c01818" />
            <circle cx="12.500" cy="9" r="3" fill="#ffd23a" stroke="#d88a10" />
            <rect x="11" y="12.500" width="3" height="3" fill="#ddd" stroke="#777" strokeWidth=".6" />
          </Svg>
        </button>
        <button type="button" aria-label="Dimension display">
          <Svg>
            <path d="M1 3h4M3 1v4M10 4h4M6 5l3-5" stroke={NAVY} />
            <path d="M1 8v8M15 8v8M1 12h14" stroke={NAVY} strokeWidth="1.300" />
            <path d="M1 12l4-2v4zM15 12l-4-2v4z" fill={NAVY} />
          </Svg>
        </button>
      </div>
      <span className="mr-[7px] ml-1.5"><Caret color="#bbb" /></span>
      <div className="flex gap-2">
        <button type="button" aria-label="Slice graphics">
          <Svg>
            <path d="M1 8l3-3h5v9H1z" fill="#ffd83a" stroke="#333" />
            <path d="M9 5l6-5v10l-6 5z" fill="#a9cdf5" stroke="#2455a4" />
            <path d="M1 8l3-3h5v3z" fill="#fff" stroke="#333" />
          </Svg>
        </button>
        <button type="button" aria-label="Show degrees of freedom">
          <Svg>
            <path d="M5 0v10M0 5h10M3 2l2-2 2 2M3 8l2 2 2-2M2 3L0 5l2 2M8 3l2 2-2 2" stroke="#f00" strokeWidth="1.200" />
            <circle cx="12" cy="9" r="3" fill="#ffd23a" stroke="#d88a10" />
            <rect x="10.500" y="12.500" width="3" height="3" fill="#ddd" stroke="#777" strokeWidth=".6" />
          </Svg>
        </button>
        <button type="button" aria-label="Relax mode">
          <Svg>
            <path d="M2 5l9 9" stroke="#c02020" strokeWidth="1.300" />
            <path d="M.5 2.500h3v3h-3zM10 12.500h3v3h-3z" fill="#fff" stroke="#c02020" />
            <path d="M12 0v8M8 4h8M10.500 1.500L12 0l1.500 1.500M10.500 6.500L12 8l1.500-1.500" stroke="#333" strokeWidth="1.200" />
          </Svg>
        </button>
      </div>
      <div className="ml-auto flex h-5 items-center *:flex *:h-full *:items-center *:border-l *:border-[#d0d0d0] *:whitespace-nowrap">
        <span className="w-[110px] pl-1 text-[11px]">-35.369 in, 3.512 in</span>
        <span className="w-[100px] pl-1">Fully Constrained</span>
        <span className="w-[38px] pl-2">1</span>
        <span className="w-[39px] border-r pl-[7px]">11</span>
      </div>
    </footer>
  );
}

function TaskbarEdge() {
  return (
    <div className="flex h-[3px] shrink-0 bg-[#26465f]">
      <span className="w-12" />
      <span className="w-[304px] border-t border-[#b8b8b8] bg-[#f5f5f5]" />
      <span className="w-10 border-t border-[#c8d4de] bg-[#eef2f6]" />
      <span className="w-[149px]" />
      <span className="w-12 bg-[#1c62a8]" />
    </div>
  );
}

export default function App() {
  return (
    <div className="flex h-screen flex-col overflow-hidden bg-white font-['Noto_Sans','Open_Sans',sans-serif] text-xs">
      <TitleBar />
      <RibbonTabs />
      <Ribbon />
      <div className="flex min-h-0 flex-1">
        <ModelBrowser />
        <div className="w-1 shrink-0 bg-[#545454]" />
        <div className="flex min-w-0 flex-1 flex-col">
          <Viewport />
          <DocumentTabs />
        </div>
      </div>
      <StatusBar />
      <TaskbarEdge />
    </div>
  );
}
